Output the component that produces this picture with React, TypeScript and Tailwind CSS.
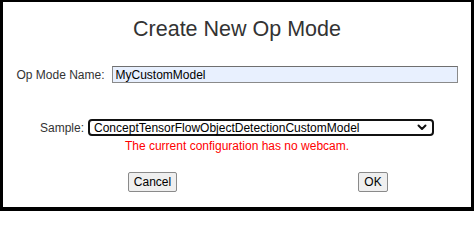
import React from "react";

export default function App() {
  const font = { fontFamily: '"Liberation Sans", Arial, sans-serif' };
  return (
    <div
      className="w-[474px] h-[211px] box-border bg-white border-black border-t-2 border-l-[3px] border-r-[3px] border-b-4 flex flex-col"
      style={font}
    >
      <div className="pt-[15px] text-center text-[21.5px] leading-[24px] text-[#333333]">
        Create New Op Mode
      </div>
      <div className="mt-[25px] flex justify-center items-center gap-[7px]">
        <span className="text-[12px] leading-[14px] text-[#333333]">Op Mode Name:</span>
        <div className="w-[346px] h-[17px] box-border bg-[#e8f0fe] border border-[#8a8a8a] border-t-[#6f6f6f] pl-[3px] flex items-center text-[12px] text-black">
          MyCustomModel
        </div>
      </div>
      <div className="mt-[36px] flex justify-center items-center gap-[4px]">
        <span className="text-[12px] leading-[14px] text-[#333333]">Sample:</span>
        <div className="w-[346px] h-[17px] box-border border-2 border-[#111111] rounded-[4px] pl-[4px] pr-[4px] flex items-center justify-between text-[12px] text-black">
          <span>ConceptTensorFlowObjectDetectionCustomModel</span>
          <svg width="10" height="7" viewBox="0 0 10 7" className="mr-[1px]">
            <path d="M1.5 1.5 L5 5 L8.5 1.5" fill="none" stroke="#111" strokeWidth="2" strokeLinecap="round" strokeLinejoin="round" />
          </svg>
        </div>
      </div>
      <div className="mt-[3px] text-center text-[12px] leading-[14px] text-[#ff0000]">
        The current configuration has no webcam.
      </div>
      <div className="mt-[19px] flex pl-[125px]">
        <button className="h-[20px] w-[49px] box-border bg-[#efefef] border border-[#8a8a8a] rounded-[2px] text-[12px] text-black flex items-center justify-center">
          Cancel
        </button>
        <button className="ml-[181px] h-[20px] w-[30px] box-border bg-[#efefef] border border-[#8a8a8a] rounded-[2px] text-[12px] text-black flex items-center justify-center">
          OK
        </button>
      </div>
    </div>
  );
}
